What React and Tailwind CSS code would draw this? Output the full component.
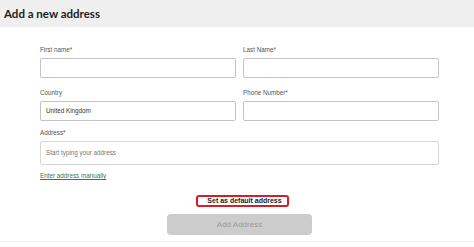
export default function App() {
  return (
    <div className="w-[474px] h-[247px] bg-white overflow-hidden font-['Liberation_Sans',Arial,sans-serif]">
      <div className="h-[27px] bg-[#efeff0] flex items-center pl-[4px]">
        <h1 className="font-['Lato',sans-serif] font-bold text-[11.5px] leading-none text-[#1d1d1d]">
          Add a new address
        </h1>
      </div>

      <div className="ml-[40px] w-[399px] pt-[18px]">
        <div className="grid grid-cols-2 gap-x-[7px]">
          <Field label="First name*" />
          <Field label="Last Name*" />
          <Field label="Country" value="United Kingdom" className="mt-[10px]" />
          <Field label="Phone Number*" className="mt-[10px]" />
        </div>

        <div className="mt-[7px]">
          <div className="text-[6.3px] leading-[10px] text-[#555]">Address*</div>
          <div className="mt-[3px] h-[24px] border border-[#d6d6d6] rounded-[2px] flex items-center pl-[5px] text-[6.3px] text-[#777]">
            Start typing your address
          </div>
        </div>

        <div className="mt-[6px] text-[6.3px] leading-[10px]">
          <a className="text-[#2f7a5c] underline underline-offset-1">Enter address manually</a>
        </div>
      </div>

      <div className="flex flex-col items-center mt-[14px]">
        <div className="ml-[11px] h-[12px] border-2 border-[#d21f2b] rounded-[3px] pl-[9px] pr-[5px] flex items-center text-[7px] font-bold text-[#222]">
          Set as default address
        </div>
        <button className="mt-[7px] ml-[5px] w-[145px] h-[21px] bg-[#cccccc] rounded-[4px] text-[8px] text-[#9a9a9a]">
          Add Address
        </button>
      </div>
      <div className="mt-[6px] h-px bg-[#efefef]" />
    </div>
  )
}

function Field({ label, value, className = '' }) {
  return (
    <div className={className}>
      <div className="text-[6.3px] leading-[10px] text-[#555]">{label}</div>
      <div className="mt-[3px] h-[20px] border border-[#c4c4c4] rounded-[2px] flex items-center pl-[5px] text-[6.3px] text-[#333]">
        {value}
      </div>
    </div>
  )
}
